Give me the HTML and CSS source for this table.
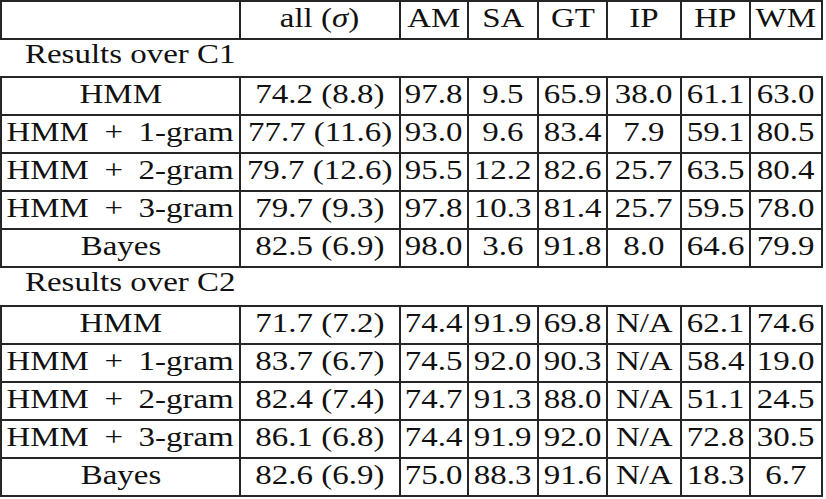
FILE: index.html
```html
<!DOCTYPE html>
<html>
<head>
<meta charset="utf-8">
<link rel="stylesheet" href="styles.css">
</head>
<body>
<div class="sheet">
  <table class="grid">
    <colgroup><col class="c0"><col class="c1"><col class="c2"><col class="c3"><col class="c4"><col class="c5"><col class="c6"><col class="c7"></colgroup>
    <tr><td></td><td><span class="t">all (<i>σ</i>)</span></td><td><span class="t">AM</span></td><td><span class="t">SA</span></td><td><span class="t">GT</span></td><td><span class="t">IP</span></td><td><span class="t">HP</span></td><td><span class="t">WM</span></td></tr>
  </table>
  <div class="label"><span class="t">Results over C1</span></div>
  <table class="grid">
    <colgroup><col class="c0"><col class="c1"><col class="c2"><col class="c3"><col class="c4"><col class="c5"><col class="c6"><col class="c7"></colgroup>
    <tr><td class="m"><span class="t">HMM</span></td><td><span class="t">74.2 (8.8)</span></td><td><span class="t">97.8</span></td><td><span class="t">9.5</span></td><td><span class="t">65.9</span></td><td><span class="t">38.0</span></td><td><span class="t">61.1</span></td><td><span class="t">63.0</span></td></tr>
    <tr><td class="m"><span class="t">HMM + 1-gram</span></td><td><span class="t">77.7 (11.6)</span></td><td><span class="t">93.0</span></td><td><span class="t">9.6</span></td><td><span class="t">83.4</span></td><td><span class="t">7.9</span></td><td><span class="t">59.1</span></td><td><span class="t">80.5</span></td></tr>
    <tr><td class="m"><span class="t">HMM + 2-gram</span></td><td><span class="t">79.7 (12.6)</span></td><td><span class="t">95.5</span></td><td><span class="t">12.2</span></td><td><span class="t">82.6</span></td><td><span class="t">25.7</span></td><td><span class="t">63.5</span></td><td><span class="t">80.4</span></td></tr>
    <tr><td class="m"><span class="t">HMM + 3-gram</span></td><td><span class="t">79.7 (9.3)</span></td><td><span class="t">97.8</span></td><td><span class="t">10.3</span></td><td><span class="t">81.4</span></td><td><span class="t">25.7</span></td><td><span class="t">59.5</span></td><td><span class="t">78.0</span></td></tr>
    <tr><td class="m"><span class="t">Bayes</span></td><td><span class="t">82.5 (6.9)</span></td><td><span class="t">98.0</span></td><td><span class="t">3.6</span></td><td><span class="t">91.8</span></td><td><span class="t">8.0</span></td><td><span class="t">64.6</span></td><td><span class="t">79.9</span></td></tr>
  </table>
  <div class="label l2"><span class="t">Results over C2</span></div>
  <table class="grid">
    <colgroup><col class="c0"><col class="c1"><col class="c2"><col class="c3"><col class="c4"><col class="c5"><col class="c6"><col class="c7"></colgroup>
    <tr><td class="m"><span class="t">HMM</span></td><td><span class="t">71.7 (7.2)</span></td><td><span class="t">74.4</span></td><td><span class="t">91.9</span></td><td><span class="t">69.8</span></td><td><span class="t">N/A</span></td><td><span class="t">62.1</span></td><td><span class="t">74.6</span></td></tr>
    <tr><td class="m"><span class="t">HMM + 1-gram</span></td><td><span class="t">83.7 (6.7)</span></td><td><span class="t">74.5</span></td><td><span class="t">92.0</span></td><td><span class="t">90.3</span></td><td><span class="t">N/A</span></td><td><span class="t">58.4</span></td><td><span class="t">19.0</span></td></tr>
    <tr><td class="m"><span class="t">HMM + 2-gram</span></td><td><span class="t">82.4 (7.4)</span></td><td><span class="t">74.7</span></td><td><span class="t">91.3</span></td><td><span class="t">88.0</span></td><td><span class="t">N/A</span></td><td><span class="t">51.1</span></td><td><span class="t">24.5</span></td></tr>
    <tr><td class="m"><span class="t">HMM + 3-gram</span></td><td><span class="t">86.1 (6.8)</span></td><td><span class="t">74.4</span></td><td><span class="t">91.9</span></td><td><span class="t">92.0</span></td><td><span class="t">N/A</span></td><td><span class="t">72.8</span></td><td><span class="t">30.5</span></td></tr>
    <tr><td class="m"><span class="t">Bayes</span></td><td><span class="t">82.6 (6.9)</span></td><td><span class="t">75.0</span></td><td><span class="t">88.3</span></td><td><span class="t">91.6</span></td><td><span class="t">N/A</span></td><td><span class="t">18.3</span></td><td><span class="t">6.7</span></td></tr>
  </table>
</div>
</body>
</html>
```

FILE: styles.css
```css
html, body {
  margin: 0;
  padding: 0;
  background: #ffffff;
}

.sheet {
  display: flex;
  flex-direction: column;
  align-items: flex-start;
  font-family: "Liberation Serif", "Times New Roman", serif;
  font-size: 27px;
  color: #111111;
}

.grid {
  border-collapse: collapse;
  table-layout: fixed;
  width: 823px;
}

.grid td {
  border: 2px solid #262626;
  height: 36px;
  padding: 0;
  text-align: center;
  vertical-align: top;
  white-space: nowrap;
  line-height: 32px;
}

.grid td.m {
  word-spacing: 6px;
}

.c0 { width: 239px; }
.c1 { width: 160px; }
.c2 { width: 68px; }
.c3 { width: 70px; }
.c4 { width: 69px; }
.c5 { width: 74px; }
.c6 { width: 69px; }
.c7 { width: 72px; }

.t {
  display: inline-block;
  transform: scaleX(1.22);
}

.label {
  height: 36px;
  line-height: 28px;
  padding-left: 25px;
  white-space: nowrap;
}

.label .t {
  transform-origin: left center;
}

.l2 {
  height: 37px;
}
```
